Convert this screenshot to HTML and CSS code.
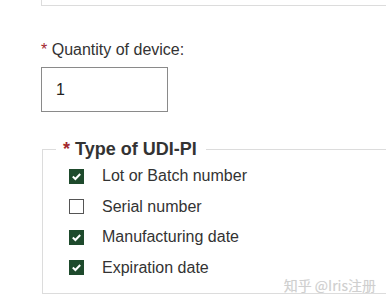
FILE: index.html
```html
<!DOCTYPE html>
<html lang="en">
<head>
<meta charset="utf-8">
<title>UDI-PI form</title>
<link rel="stylesheet" href="styles.css">
</head>
<body>
<div class="top-box"></div>
<div class="field">
  <label class="label" for="qty"><span class="req">*</span> Quantity of device:</label>
  <input class="text-input" id="qty" type="text" value="1">
</div>
<fieldset class="group">
  <legend class="legend"><span class="req">*</span> Type of UDI-PI</legend>
  <div class="option"><span class="box checked"><svg viewBox="0 0 15 15" width="15" height="15"><path d="M3.8 7.6 L6.4 10 L11.2 5" fill="none" stroke="#fff" stroke-width="2"/></svg></span><span class="opt-text">Lot or Batch number</span></div>
  <div class="option"><span class="box"></span><span class="opt-text">Serial number</span></div>
  <div class="option"><span class="box checked"><svg viewBox="0 0 15 15" width="15" height="15"><path d="M3.8 7.6 L6.4 10 L11.2 5" fill="none" stroke="#fff" stroke-width="2"/></svg></span><span class="opt-text">Manufacturing date</span></div>
  <div class="option"><span class="box checked"><svg viewBox="0 0 15 15" width="15" height="15"><path d="M3.8 7.6 L6.4 10 L11.2 5" fill="none" stroke="#fff" stroke-width="2"/></svg></span><span class="opt-text">Expiration date</span></div>
</fieldset>
<div class="watermark">知乎 @Iris注册</div>
</body>
</html>
```
FILE: styles.css
```css
html, body {
  margin: 0;
  padding: 0;
}
body {
  width: 386px;
  height: 305px;
  overflow: hidden;
  position: relative;
  background: #fff;
  font-family: "Liberation Sans", Arial, sans-serif;
  color: #333;
}
.top-box {
  box-sizing: border-box;
  margin-left: 41px;
  width: 345px;
  height: 6px;
  border: 1px solid #dcdcdc;
  border-top: none;
  border-right: none;
}
.field {
  margin: 35px 0 0 41px;
  display: flex;
  flex-direction: column;
  align-items: flex-start;
}
.label {
  font-size: 16px;
  line-height: 18px;
}
.req {
  color: #a3282d;
}
.text-input {
  margin-top: 8px;
  box-sizing: border-box;
  width: 127px;
  height: 45px;
  border: 1px solid #8a8a8a;
  border-radius: 0;
  padding: 0 0 0 14px;
  font-family: "Liberation Sans", Arial, sans-serif;
  font-size: 16px;
  color: #222;
  outline: none;
}
.group {
  box-sizing: border-box;
  margin: 27px 0 0 42px;
  width: 344px;
  padding: 2px 0 10px 26px;
  border: 1px solid #dcdcdc;
  border-right: none;
  min-width: 0;
}
.legend {
  margin-left: -13px;
  padding: 0 9px 0 7px;
  font-size: 18px;
  line-height: 20px;
  font-weight: bold;
  color: #333;
}
.option {
  height: 30.5px;
  display: flex;
  align-items: center;
  gap: 18px;
  font-size: 16px;
}
.box {
  box-sizing: border-box;
  width: 15px;
  height: 15px;
  border: 1px solid #555;
  background: #fff;
  display: flex;
}
.box.checked {
  border: none;
  background: #1e4a2c;
}
.watermark {
  position: absolute;
  right: 10px;
  bottom: 12px;
  font-family: "Noto Sans CJK SC", "Liberation Sans", sans-serif;
  font-size: 14px;
  line-height: 16px;
  color: #cfcfcf;
  text-shadow: 0 0 1px #eee;
}
```
